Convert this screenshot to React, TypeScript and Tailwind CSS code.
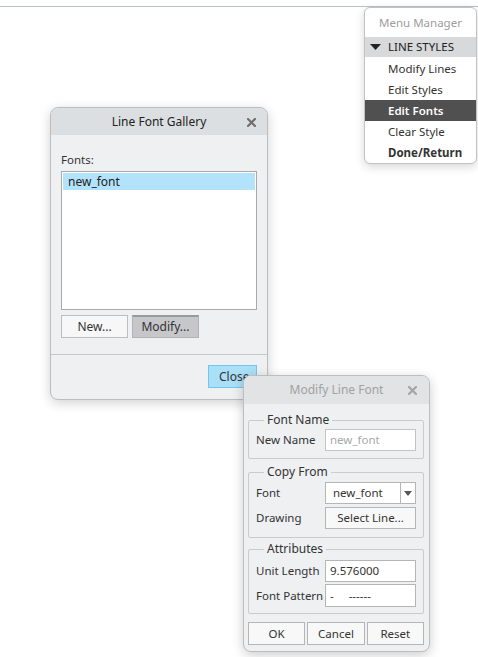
import React from "react";

function CloseX({ color }: { color: string }) {
  return (
    <svg width="9" height="9" viewBox="0 0 9 9">
      <path d="M1 1L8 8M8 1L1 8" stroke={color} strokeWidth="2.2" strokeLinecap="square" />
    </svg>
  );
}

function Group({ title, children, pb }: { title: string; children: React.ReactNode; pb: string }) {
  return (
    <fieldset className={`border border-[#c9cbcd] rounded-[2px] px-[7px] ${pb} min-w-0`}>
      <legend className="ml-[8px] px-[3px] h-[16px] leading-[16px] text-[12px] text-[#333]">{title}</legend>
      {children}
    </fieldset>
  );
}

export default function App() {
  return (
    <div className="relative w-[478px] h-[657px] bg-white overflow-hidden font-['Noto_Sans',sans-serif] text-[11.5px] text-[#333]">
      <div className="h-[7px] border-b border-[#b7c3c7]" />

      {/* Menu Manager */}
      <div className="absolute left-[364px] top-[7px] w-[113px] h-[157px] bg-white border border-[#c2c2c2] rounded-[6px] shadow-[0_3px_10px_rgba(0,0,0,0.16)] flex flex-col overflow-hidden">
        <div className="h-[29px] flex items-center justify-center text-[#9d9d9d]">Menu Manager</div>
        <div className="h-[20px] bg-[#d7d9db] flex items-center pl-[5px] gap-[7px] text-[#222]">
          <svg width="11" height="6" viewBox="0 0 11 6">
            <path d="M0 0H11L5.5 6Z" fill="#222" />
          </svg>
          <span>LINE STYLES</span>
        </div>
        <div className="pt-[1px] flex flex-col">
          <div className="h-[21px] flex items-center pl-[23px]">Modify Lines</div>
          <div className="h-[21px] flex items-center pl-[23px]">Edit Styles</div>
          <div className="h-[21px] flex items-center pl-[23px] bg-[#505050] text-white font-semibold">Edit Fonts</div>
          <div className="h-[21px] flex items-center pl-[23px]">Clear Style</div>
          <div className="h-[21px] flex items-center pl-[23px] font-bold">Done/Return</div>
        </div>
      </div>

      {/* Line Font Gallery */}
      <div className="absolute left-[50px] top-[107px] w-[218px] h-[293px] bg-[#eef0f2] border border-[#bdbdbd] rounded-[8px] shadow-[0_3px_12px_rgba(0,0,0,0.18)] flex flex-col overflow-hidden">
        <div className="h-[27px] shrink-0 bg-[#dcdfe1] relative flex items-center justify-center text-[12px] text-[#222]">
          <span>Line Font Gallery</span>
          <div className="absolute right-[11px] top-[10px]">
            <CloseX color="#6f6f6f" />
          </div>
        </div>
        <div className="flex flex-col px-[10px] pt-[17px]">
          <div className="h-[16px] leading-[16px]">Fonts:</div>
          <div className="mt-[3px] h-[139px] bg-white border border-[#a9a9a9] p-[1px]">
            <div className="h-[17px] bg-[#b3e3fa] pl-[5px] flex items-center text-[12px] text-[#222]">new_font</div>
          </div>
          <div className="mt-[5px] flex gap-[4px]">
            <div className="w-[67px] h-[23px] bg-[#f7f7f7] border border-[#bdbdbd] flex items-center justify-center text-[12px]">New...</div>
            <div className="w-[67px] h-[23px] bg-[#c7c7cb] border border-[#b3b3b3] border-t-2 border-t-[#9a9a9a] flex items-center justify-center text-[12px]">Modify...</div>
          </div>
        </div>
        <div className="mt-[16px] h-px bg-[#c6c8ca]" />
        <div className="flex justify-end pr-[10px] mt-[10px]">
          <div className="w-[49px] h-[23px] bg-[#a9dff7] border border-[#72c6ee] flex items-center pl-[10px] text-[12px]">Close</div>
        </div>
      </div>

      {/* Modify Line Font */}
      <div className="absolute left-[243px] top-[375px] w-[187px] h-[277px] bg-[#eef0f2] border border-[#bdbdbd] rounded-[8px] shadow-[0_3px_12px_rgba(0,0,0,0.2)] flex flex-col overflow-hidden">
        <div className="h-[28px] shrink-0 bg-[#e1e3e5] relative flex items-center justify-center text-[12px] text-[#a2a2a2]">
          <span>Modify Line Font</span>
          <div className="absolute right-[12px] top-[10px]">
            <CloseX color="#a5a5a5" />
          </div>
        </div>
        <div className="flex flex-col pl-[4px] pr-[5px] pt-[8px]">
          <Group title="Font Name" pb="pb-[7px]">
            <div className="mt-[1px] flex items-center">
              <span className="w-[69px]">New Name</span>
              <div className="w-[91px] h-[22px] bg-white border border-[#c4c4c4] flex items-center pl-[4px] text-[#a8a8a8]">new_font</div>
            </div>
          </Group>
          <div className="mt-[5px]">
            <Group title="Copy From" pb="pb-[8px]">
              <div className="mt-[2px] flex items-center">
                <span className="w-[69px]">Font</span>
                <div className="w-[91px] h-[22px] bg-white border border-[#b5b5b5] flex">
                  <div className="flex-1 flex items-center pl-[7px]">new_font</div>
                  <div className="w-[15px] border-l border-[#b5b5b5] flex items-center justify-center">
                    <svg width="8" height="5" viewBox="0 0 8 5">
                      <path d="M0 0H8L4 5Z" fill="#555" />
                    </svg>
                  </div>
                </div>
              </div>
              <div className="mt-[3px] flex items-center">
                <span className="w-[69px]">Drawing</span>
                <div className="w-[91px] h-[22px] bg-[#f8f8f8] border border-[#b5b5b5] flex items-center justify-center">Select Line...</div>
              </div>
            </Group>
          </div>
          <div className="mt-[3px]">
            <Group title="Attributes" pb="pb-[6px]">
              <div className="mt-[3px] flex items-center">
                <span className="w-[69px]">Unit Length</span>
                <div className="w-[91px] h-[22px] bg-white border border-[#b5b5b5] flex items-center pl-[4px]">9.576000</div>
              </div>
              <div className="mt-[2px] flex items-center">
                <span className="w-[69px] whitespace-nowrap">Font Pattern</span>
                <div className="w-[91px] h-[23px] bg-white border border-[#b5b5b5] flex items-center pl-[4px] whitespace-pre">{"-     ------"}</div>
              </div>
            </Group>
          </div>
          <div className="mt-[8px] grid grid-cols-3 gap-[2px]">
            <div className="h-[23px] bg-[#f8f8f8] border border-[#b5b5b5] flex items-center justify-center">OK</div>
            <div className="h-[23px] bg-[#f8f8f8] border border-[#b5b5b5] flex items-center justify-center">Cancel</div>
            <div className="h-[23px] bg-[#f8f8f8] border border-[#b5b5b5] flex items-center justify-center">Reset</div>
          </div>
        </div>
      </div>
    </div>
  );
}
